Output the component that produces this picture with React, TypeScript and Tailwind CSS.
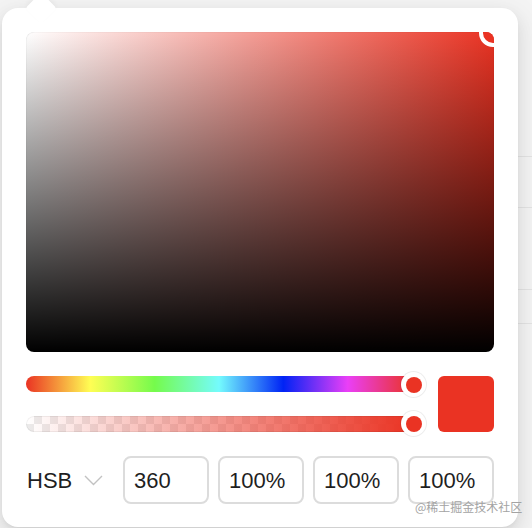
import React from 'react'

const fields = ['360', '100%', '100%', '100%']

function Thumb({ className }: { className: string }) {
  return (
    <div className={`absolute flex h-[25px] w-[25px] items-center justify-center rounded-full bg-white shadow-[0_0_0_1px_rgba(0,0,0,0.07)] ${className}`}>
      <div className="h-4 w-4 rounded-full bg-[#ea3323]" />
    </div>
  )
}

export default function App() {
  return (
    <div className="relative h-[528px] w-[532px] overflow-hidden bg-[#f4f4f4] font-['Liberation_Sans',Arial,sans-serif]">
      {/* page content peeking out behind the popover */}
      <div className="absolute right-0 top-[156px] h-px w-[14px] bg-[#e4e4e4]" />
      <div className="absolute right-0 top-[207px] h-px w-[14px] bg-[#e4e4e4]" />
      <div className="absolute right-0 top-[289px] h-px w-[14px] bg-[#e4e4e4]" />
      <div className="absolute right-0 top-[323px] h-px w-[14px] bg-[#e4e4e4]" />

      {/* popover */}
      <div className="absolute left-[2px] top-[8px] h-[519px] w-[516px] rounded-[16px] bg-white shadow-[0_6px_16px_0_rgba(0,0,0,0.08),0_3px_6px_-4px_rgba(0,0,0,0.12),0_9px_28px_8px_rgba(0,0,0,0.05)]">
        <div className="absolute left-[28px] top-[-11px] h-[22px] w-[22px] rotate-45 rounded-[3px] bg-white shadow-[-2px_-2px_5px_rgba(0,0,0,0.04)]" />

        <div className="relative flex flex-col px-6 pt-6">
          {/* saturation / brightness */}
          <div className="relative h-[320px] overflow-hidden rounded-[8px] shadow-[inset_0_0_1px_rgba(0,0,0,0.3)] [background-image:linear-gradient(to_top,#000,rgba(0,0,0,0)),linear-gradient(to_right,#fff,#ea3323)]">
            <div className="absolute right-[-13px] top-[-13px] h-[28px] w-[28px] rounded-full border-[4px] border-white bg-[#ea3323]" />
          </div>

          {/* sliders + swatch */}
          <div className="mt-6 flex gap-4">
            <div className="relative flex h-14 flex-1 flex-col justify-between">
              <div className="relative mr-[10px] h-4 rounded-full [background-image:linear-gradient(to_right,#ea3323_0%,#fffe54_16.67%,#75fb4c_33.33%,#74fbfd_50%,#0023f5_66.67%,#ea3ff7_83.33%,#ea3323_100%)]" />
              <div className="relative mr-[10px] h-4 rounded-full shadow-[inset_0_0_0_1px_rgba(0,0,0,0.06)] [background-image:linear-gradient(to_right,rgba(234,51,35,0),#ea3323),repeating-conic-gradient(#ebebeb_0_25%,#fff_0_50%)] [background-size:100%_100%,16px_16px]" />
              <Thumb className="right-[-4px] top-[-4px]" />
              <Thumb className="bottom-[-4px] right-[-4px]" />
            </div>
            <div className="h-14 w-14 rounded-[6px] bg-[#ea3323]" />
          </div>

          {/* format + values */}
          <div className="mt-6 flex h-12 items-center">
            <div className="flex w-[97px] items-center gap-[12px] pl-[1px]">
              <span className="text-[22px] text-[#1f1f1f]">HSB</span>
              <svg width="19" height="11" viewBox="0 0 19 11" fill="none" stroke="#c2c2c2" strokeWidth="1.4">
                <polyline points="1,1 9.5,9.5 18,1" />
              </svg>
            </div>
            <div className="grid h-12 flex-1 grid-cols-4 gap-[9px]">
              {fields.map((v, i) => (
                <div key={i} className="flex items-center rounded-[8px] border-2 border-[#dcdcdc] pl-[9px] text-[22px] text-[#1f1f1f]">
                  {v}
                </div>
              ))}
            </div>
          </div>
        </div>
      </div>

      <div className="absolute left-[415px] top-[500px] text-[12px] leading-[14px] text-[#a3a3a3] font-['Noto_Sans_CJK_SC',sans-serif]">
        @稀土掘金技术社区
      </div>
    </div>
  )
}
